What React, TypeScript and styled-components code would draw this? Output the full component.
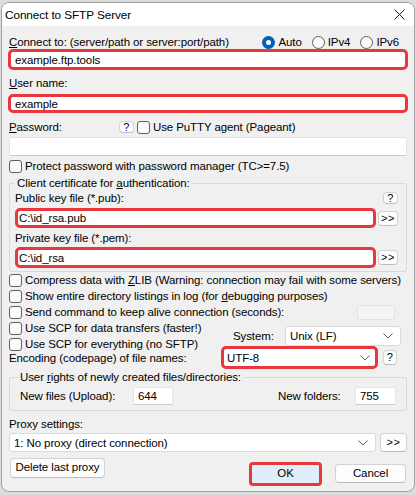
import React from 'react';
import styled, { createGlobalStyle, css } from 'styled-components';

const FONT = `"Liberation Sans", Arial, sans-serif`;
const RED = '#e8383d';

const GlobalStyle = createGlobalStyle`
  html, body { margin: 0; padding: 0; background: #dcdcdc; }
  body { font-family: ${FONT}; font-size: 11.5px; letter-spacing: -0.1px; color: #000; }
  * { box-sizing: border-box; }
  u { text-decoration-thickness: 1px; text-underline-offset: 1px; }
`;

const Window = styled.div`
  margin: 2px 0 0 1px;
  width: 414px;
  height: 490px;
  border: 1px solid #a0a0a0;
  border-radius: 8px;
  overflow: hidden;
  background: #f0f0f0;
  display: flex;
  flex-direction: column;
`;

const TitleBar = styled.div`
  height: 23px;
  flex: none;
  background: #fff;
  display: flex;
  align-items: center;
  justify-content: space-between;
  padding: 0 9px 0 3px;
  font-size: 11.8px;
`;

const Body = styled.div`
  padding: 0 7px;
  display: flex;
  flex-direction: column;
`;

const Row = styled.div<{ $mt?: number; $h: number; $gap?: number }>`
  display: flex;
  align-items: center;
  margin-top: ${(p) => p.$mt ?? 0}px;
  height: ${(p) => p.$h}px;
  gap: ${(p) => p.$gap ?? 0}px;
  flex: none;
`;

const Label = styled.span<{ $w?: number }>`
  white-space: nowrap;
  ${(p) => p.$w !== undefined && css`width: ${p.$w}px; flex: none;`}
`;

const Spacer = styled.div`
  flex: 1;
`;

const highlight = css`
  border: 3px solid ${RED};
  border-radius: 5px;
`;

const Field = styled.div<{ $hl?: boolean; $w?: number; $pad?: number; $out?: boolean; $disabled?: boolean }>`
  height: 100%;
  background: ${(p) => (p.$disabled ? '#f4f4f4' : '#fff')};
  border: 1px solid ${(p) => (p.$disabled ? '#e2e2e2' : '#e4e4e4')};
  border-bottom-color: ${(p) => (p.$disabled ? '#e2e2e2' : '#c8c8c8')};
  border-radius: 2px;
  display: flex;
  align-items: center;
  padding-left: ${(p) => p.$pad ?? 4}px;
  white-space: nowrap;
  overflow: hidden;
  ${(p) => (p.$w !== undefined ? css`width: ${p.$w}px; flex: none;` : css`flex: 1;`)}
  ${(p) => p.$hl && highlight}
  ${(p) => p.$out && css`margin: 0 -1px;`}
`;

const SmallBox = styled(Field)`
  height: 15px;
  margin-right: 12px;
`;

const Combo = styled.div<{ $hl?: boolean; $w?: number }>`
  height: 100%;
  background: #fff;
  border: 1px solid #dadada;
  border-radius: 3px;
  display: flex;
  align-items: center;
  justify-content: space-between;
  padding: 0 7px 0 4px;
  white-space: nowrap;
  ${(p) => (p.$w !== undefined ? css`width: ${p.$w}px; flex: none;` : css`flex: 1;`)}
  ${(p) => p.$hl && highlight}
  ${(p) => p.$hl && css`padding: 0 5px 0 3px;`}
`;

const Btn = styled.button<{ $w: number; $h: number; $mt?: number; $ml?: number; $hl?: boolean; $small?: boolean }>`
  font-family: ${FONT};
  font-size: ${(p) => (p.$small ? 11 : 11.5)}px;
  letter-spacing: ${(p) => (p.$small ? 0.5 : -0.1)}px;
  color: #000;
  width: ${(p) => p.$w}px;
  height: ${(p) => p.$h}px;
  margin-top: ${(p) => p.$mt ?? 0}px;
  margin-left: ${(p) => p.$ml ?? 0}px;
  flex: none;
  padding: 0;
  background: #fdfdfd;
  border: 1px solid #d3d3d3;
  border-bottom-color: #bcbcbc;
  border-radius: 4px;
  display: flex;
  align-items: center;
  justify-content: center;
  line-height: 1;
  ${(p) =>
    p.$hl &&
    css`
      background: #e0eefa;
      border: 3px solid ${RED};
      border-radius: 4px;
    `}
`;

const CheckBox = styled.span`
  width: 13px;
  height: 13px;
  flex: none;
  border: 1px solid #5f5f5f;
  border-radius: 3px;
  background: #fafafa;
`;

const CheckLine = styled.label<{ $h?: number; $ml?: number }>`
  display: flex;
  align-items: center;
  gap: 3px;
  height: ${(p) => p.$h ?? 16}px;
  margin-left: ${(p) => p.$ml ?? 0}px;
  flex: none;
  white-space: nowrap;
`;

const RadioGroup = styled.div`
  display: flex;
  align-items: center;
  gap: 10px;
  margin-right: 8px;
`;

const RadioItem = styled.label`
  display: flex;
  align-items: center;
  gap: 3px;
`;

const RadioCircle = styled.span<{ $on?: boolean }>`
  width: 13px;
  height: 13px;
  border-radius: 50%;
  flex: none;
  display: flex;
  align-items: center;
  justify-content: center;
  ${(p) =>
    p.$on
      ? css`
          background: #005fb8;
          &::after {
            content: '';
            width: 5px;
            height: 5px;
            border-radius: 50%;
            background: #fff;
          }
        `
      : css`
          border: 1px solid #5f5f5f;
          background: #fafafa;
        `}
`;

const Group = styled.fieldset<{ $mt: number; $pl: number; $pr: number; $pb: number }>`
  margin: ${(p) => p.$mt}px 0 0 0;
  padding: 0 ${(p) => p.$pr}px ${(p) => p.$pb}px ${(p) => p.$pl}px;
  border: 1px solid #d9d9d9;
  border-radius: 2px;
  min-width: 0;
  flex: none;
`;

const Legend = styled.legend<{ $ml?: number }>`
  padding: 0 2px;
  margin-left: ${(p) => p.$ml ?? 0}px;
  height: 14px;
  line-height: 14px;
  white-space: nowrap;
`;

const Column = styled.div`
  display: flex;
  flex-direction: column;
`;

const SplitRows = styled.div`
  display: flex;
  align-items: center;
  flex: none;
`;

const SystemBox = styled.div`
  display: flex;
  align-items: center;
  height: 20px;
  margin-left: auto;
  margin-right: 6px;
`;

const ButtonBar = styled.div`
  display: flex;
  align-items: flex-start;
  margin-top: 6px;
  padding: 0 1px;
`;

const DialogButtons = styled.div`
  margin-left: auto;
  display: flex;
  align-items: flex-start;
  gap: 13px;
`;

const Chevron = () => (
  <svg width="10" height="6" viewBox="0 0 10 6">
    <polyline points="0.5,0.5 5,5 9.5,0.5" fill="none" stroke="#606060" strokeWidth="1" />
  </svg>
);

const CloseIcon = () => (
  <svg width="11" height="11" viewBox="0 0 11 11">
    <path d="M0.5 0.5 L10.5 10.5 M10.5 0.5 L0.5 10.5" stroke="#1a1a1a" strokeWidth="1" />
  </svg>
);

const Check = ({ children, ml }: { children: React.ReactNode; ml?: number }) => (
  <CheckLine $ml={ml}>
    <CheckBox />
    <span>{children}</span>
  </CheckLine>
);

export default function App() {
  return (
    <>
      <GlobalStyle />
      <Window>
        <TitleBar>
          <span>Connect to SFTP Server</span>
          <CloseIcon />
        </TitleBar>
        <Body>
          <Row $mt={9} $h={14}>
            <Label>
              <u>C</u>onnect to: (server/path or server:port/path)
            </Label>
            <Spacer />
            <RadioGroup>
              <RadioItem>
                <RadioCircle $on />
                Auto
              </RadioItem>
              <RadioItem>
                <RadioCircle />
                IPv4
              </RadioItem>
              <RadioItem>
                <RadioCircle />
                IPv6
              </RadioItem>
            </RadioGroup>
          </Row>
          <Row $h={21}>
            <Field $hl $out $pad={4}>example.ftp.tools</Field>
          </Row>
          <Row $mt={6} $h={14}>
            <Label>
              <u>U</u>ser name:
            </Label>
          </Row>
          <Row $mt={4} $h={19}>
            <Field $hl $out $pad={4}>example</Field>
          </Row>
          <Row $mt={6} $h={16}>
            <Label $w={110}>
              <u>P</u>assword:
            </Label>
            <Btn $w={15} $h={12} $small>?</Btn>
            <Check ml={3}>Use PuTTY agent (Pageant)</Check>
          </Row>
          <Row $mt={2} $h={19}>
            <Field />
          </Row>
          <Row $mt={3} $h={14}>
            <Check>Protect password with password manager (TC&gt;=7.5)</Check>
          </Row>
          <Group $mt={3} $pl={5} $pr={8} $pb={3}>
            <Legend>
              Client certificate for <u>a</u>uthentication:
            </Legend>
            <Row $h={16}>
              <Label>Public key file (*.pub):</Label>
              <Spacer />
              <Btn $w={15} $h={12} $small>?</Btn>
            </Row>
            <Row $mt={2} $h={20} $gap={2}>
              <Field $hl $pad={1}>C:\id_rsa.pub</Field>
              <Btn $w={20} $h={15} $small>&gt;&gt;</Btn>
            </Row>
            <Row $mt={3} $h={14}>
              <Label>Private key file (*.pem):</Label>
            </Row>
            <Row $mt={2} $h={21} $gap={2}>
              <Field $hl $pad={1}>C:\id_rsa</Field>
              <Btn $w={20} $h={15} $small>&gt;&gt;</Btn>
            </Row>
          </Group>
          <Column>
            <Check>
              Compress data with <u>Z</u>LIB (Warning: connection may fail with some servers)
            </Check>
            <Check>
              Show entire directory listings in log (for <u>d</u>ebugging purposes)
            </Check>
            <Row $h={16}>
              <Check>Send command to keep alive connection (seconds):</Check>
              <Spacer />
              <SmallBox $w={38} $disabled />
            </Row>
          </Column>
          <SplitRows>
            <Column>
              <Check>Use SCP for data transfers (faster!)</Check>
              <Check>Use SCP for everything (no SFTP)</Check>
            </Column>
            <SystemBox>
              <Label $w={52}>System:</Label>
              <Combo $w={116}>
                <span>Unix (LF)</span>
                <Chevron />
              </Combo>
            </SystemBox>
          </SplitRows>
          <Row $mt={-6} $h={23}>
            <Label $w={212}>Encoding (codepage) of file names:</Label>
            <Combo $hl $w={157}>
              <span>UTF-8</span>
              <Chevron />
            </Combo>
            <Btn $w={14} $h={15} $ml={5} $small>?</Btn>
          </Row>
          <Group $mt={1} $pl={10} $pr={10} $pb={5}>
            <Legend $ml={-2}>
              User <u>r</u>ights of newly created files/directories:
            </Legend>
            <Row $mt={3} $h={18}>
              <Label $w={113}>New files (Upload):</Label>
              <Field $w={40} $pad={4}>644</Field>
              <Spacer />
              <Label $w={77}>New folders:</Label>
              <Field $w={41} $pad={4}>755</Field>
            </Row>
          </Group>
          <Row $mt={6} $h={14}>
            <Label>Proxy settings:</Label>
          </Row>
          <Row $mt={2} $h={19}>
            <Combo $w={367}>
              <span>1: No proxy (direct connection)</span>
              <Chevron />
            </Combo>
            <Spacer />
            <Btn $w={27} $h={19} $small>&gt;&gt;</Btn>
          </Row>
          <ButtonBar>
            <Btn $w={95} $h={20}>Delete last proxy</Btn>
            <DialogButtons>
              <Btn $w={73} $h={24} $mt={4} $hl>OK</Btn>
              <Btn $w={71} $h={19} $mt={6}>Cancel</Btn>
            </DialogButtons>
          </ButtonBar>
        </Body>
      </Window>
    </>
  );
}
